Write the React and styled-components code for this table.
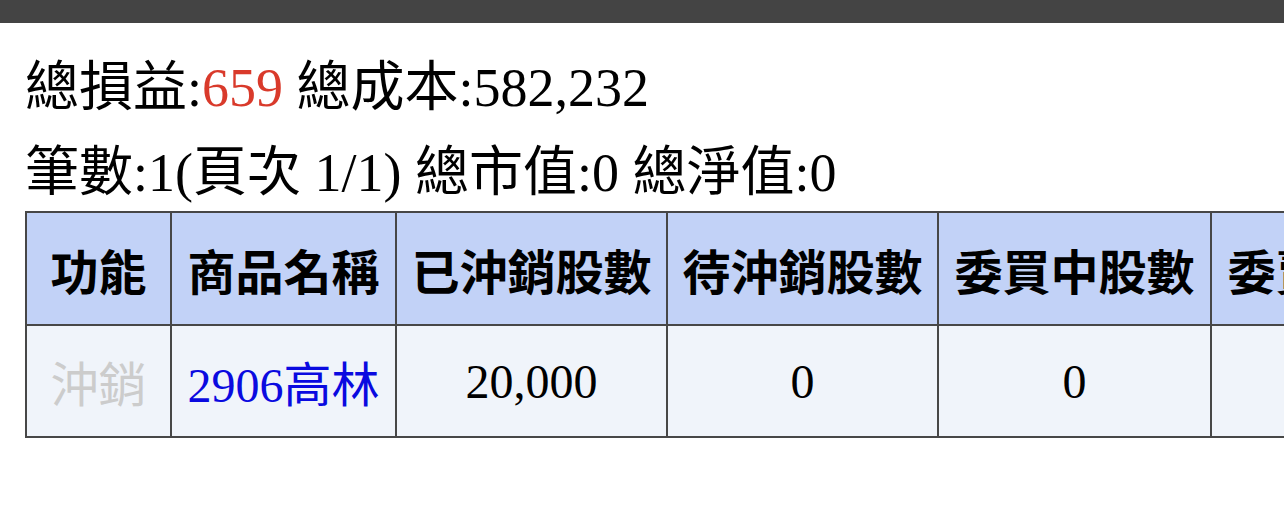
import React from 'react'
import styled, { createGlobalStyle } from 'styled-components';

const GlobalStyle = createGlobalStyle`
    html, body {
        margin: 0;
        padding: 0;
        background: #ffffff;
        overflow: hidden;
    }
`;

const TopBar = styled.div`
    height: 23px;
    background: #444444;
`;

const Page = styled.div`
    padding: 25px 0 0 25px;
    font-family: "Liberation Serif", "Noto Sans CJK TC", serif;
    color: #000;
`;

const SummaryLine = styled.div`
    font-size: 54px;
    line-height: ${({ $lh }) => $lh || 80}px;
    padding-top: ${({ $pt }) => $pt || 0}px;
    white-space: nowrap;
`;

const Loss = styled.span`
    color: #d93a2b;
`;

const TableWrap = styled.div`
    margin-top: 1px;
    overflow: hidden;
`;

const Table = styled.table`
    table-layout: fixed;
    width: 1460px;
    border-collapse: separate;
    border-spacing: 0;
    border-left: 2px solid #474747;
    border-top: 2px solid #474747;
`;

const Col = styled.col`
    width: ${({ $w }) => $w}px;
`;

const Th = styled.th`
    box-sizing: border-box;
    height: 113px;
    padding: 0 6px;
    background: #c2d2f7;
    border-right: 2px solid #474747;
    border-bottom: 2px solid #474747;
    font-family: "Noto Sans CJK TC", sans-serif;
    font-weight: 700;
    font-size: 48px;
    text-align: center;
    white-space: nowrap;
    overflow: hidden;
`;

const Td = styled.td`
    box-sizing: border-box;
    height: 112px;
    padding: 0 6px;
    background: #f0f4fa;
    border-right: 2px solid #474747;
    border-bottom: 2px solid #474747;
    font-size: 48px;
    text-align: center;
    white-space: nowrap;
    color: ${({ $color }) => $color || '#000'};
    font-family: ${({ $sans }) => ($sans ? '"Noto Sans CJK TC", sans-serif' : '"Liberation Serif", "Noto Sans CJK TC", serif')};
`;

const columns = [145, 225, 271, 271, 273, 273];
const headers = ['功能', '商品名稱', '已沖銷股數', '待沖銷股數', '委買中股數', '委賣中股數'];

const App = () => {
    return (
        <>
            <GlobalStyle />
            <TopBar />
            <Page>
                <SummaryLine>總損益:<Loss>659</Loss> 總成本:582,232</SummaryLine>
                <SummaryLine $lh={74} $pt={8}>筆數:1(頁次 1/1) 總市值:0 總淨值:0</SummaryLine>
                <TableWrap>
                    <Table>
                        <colgroup>
                            {columns.map((w, i) => <Col key={i} $w={w} />)}
                        </colgroup>
                        <thead>
                            <tr>
                                {headers.map((h) => <Th key={h}>{h}</Th>)}
                            </tr>
                        </thead>
                        <tbody>
                            <tr>
                                <Td $sans $color="#cccccc">沖銷</Td>
                                <Td $color="#0a0ae0">2906高林</Td>
                                <Td>20,000</Td>
                                <Td>0</Td>
                                <Td>0</Td>
                                <Td>0</Td>
                            </tr>
                        </tbody>
                    </Table>
                </TableWrap>
            </Page>
        </>
    )
}

export default App
